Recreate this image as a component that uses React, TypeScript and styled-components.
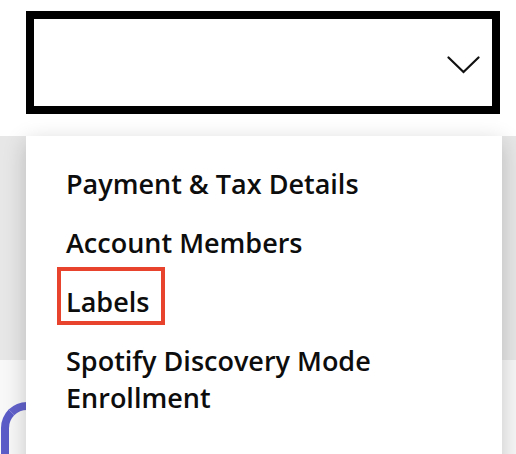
import React from "react";
import styled, { createGlobalStyle } from "styled-components";

const Global = createGlobalStyle`
  html, body { margin: 0; padding: 0; background: #ffffff; }
  body { font-family: "Open Sans", "Noto Sans", "Liberation Sans", sans-serif; }
  *, *::before, *::after { box-sizing: border-box; }
`;

const Page = styled.div`
  position: relative;
  width: 516px;
  height: 454px;
  overflow: hidden;
  display: flex;
  flex-direction: column;
  background: #ffffff;
`;

const Header = styled.div`
  height: 136px;
  flex: none;
  padding: 11px 16px 0 26px;
  background: #ffffff;
`;

const SelectBox = styled.div`
  width: 474px;
  height: 103px;
  border: 8px solid #000000;
  background: #ffffff;
  display: flex;
  align-items: center;
  justify-content: flex-end;
  padding: 4px 12px 0 0;
`;

const Band = styled.div`
  height: 224px;
  flex: none;
  background: #e7e7e7;
`;

const Lower = styled.div`
  flex: 1;
  background: #f8f8f8;
  padding: 42px 0 0 1px;
`;

const CardCorner = styled.div`
  width: 80px;
  height: 120px;
  border-top: 8px solid #6262cc;
  border-left: 8px solid #5c5cc8;
  border-top-left-radius: 26px;
`;

const Menu = styled.div`
  position: absolute;
  left: 26px;
  top: 136px;
  width: 476px;
  height: 340px;
  background: #ffffff;
  box-shadow: 0 6px 22px rgba(0, 0, 0, 0.2);
  padding: 29px 24px 0 40px;
  display: flex;
  flex-direction: column;
  gap: 22px;
`;

const Item = styled.div`
  position: relative;
  font-size: 27px;
  font-weight: 600;
  line-height: 37px;
  color: #0d0d0d;
`;

const Highlight = styled.span`
  position: relative;
  &::after {
    content: "";
    position: absolute;
    left: -9px;
    top: -16px;
    width: 108px;
    height: 58px;
    border: 4px solid #e8432d;
    pointer-events: none;
  }
`;

const Chevron = () => (
  <svg width="33" height="18" viewBox="0 0 33 18" fill="none">
    <polyline
      points="1.5,1.5 16.5,16 31.5,1.5"
      stroke="#111"
      strokeWidth="2.2"
      strokeLinecap="round"
      strokeLinejoin="miter"
    />
  </svg>
);

export default function App() {
  return (
    <>
      <Global />
      <Page>
        <Header>
          <SelectBox>
            <Chevron />
          </SelectBox>
        </Header>
        <Band />
        <Lower>
          <CardCorner />
        </Lower>
        <Menu>
          <Item>Payment &amp; Tax Details</Item>
          <Item>Account Members</Item>
          <Item>
            <Highlight>Labels</Highlight>
          </Item>
          <Item>
            Spotify Discovery Mode
            <br />
            Enrollment
          </Item>
        </Menu>
      </Page>
    </>
  );
}
